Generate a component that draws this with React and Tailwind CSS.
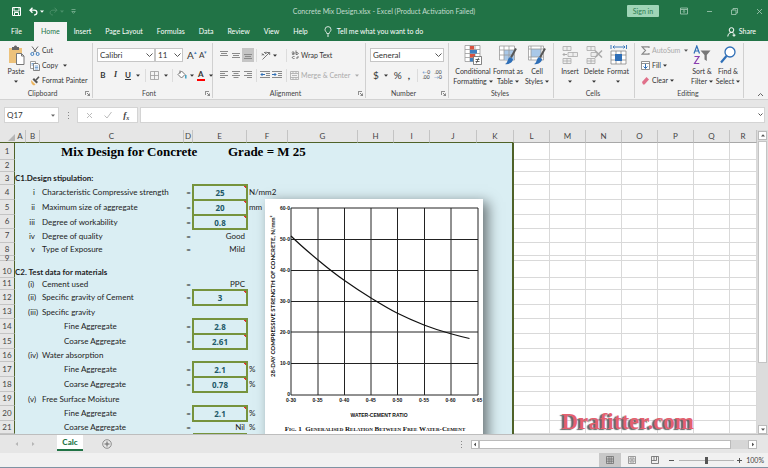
import { useState } from 'react';

const tabs = ['File', 'Home', 'Insert', 'Page Layout', 'Formulas', 'Data', 'Review', 'View', 'Help'];

const columns = [
  { name: 'A', width: 'w-[11px]' },
  { name: 'B', width: 'w-[14px]' },
  { name: 'C', width: 'w-[144px]' },
  { name: 'D', width: 'w-[9px]' },
  { name: 'E', width: 'w-[54px]' },
  { name: 'F', width: 'w-[41px]' },
  { name: 'G', width: 'w-[70px]' },
  { name: 'H', width: 'w-[36px]' },
  { name: 'I', width: 'w-[36px]' },
  { name: 'J', width: 'w-[47px]' },
  { name: 'K', width: 'w-[37px]' },
  { name: 'L', width: 'w-[36px]' },
  { name: 'M', width: 'w-[36px]' },
  { name: 'N', width: 'w-[36px]' },
  { name: 'O', width: 'w-[36px]' },
  { name: 'P', width: 'w-[36px]' },
  { name: 'Q', width: 'w-[36px]' },
  { name: 'R', width: 'w-auto' },
];

const rows = [
  { h: 'h-[17px]', title: 'Mix Design for Concrete', grade: 'Grade = M 25' },
  { h: 'h-[12px]' },
  { h: 'h-[13px]', heading: 'C1.Design stipulation:' },
  { h: 'h-[15px]', no: 'i', text: 'Characteristic Compressive strength', input: '25', unit: 'N/mm2' },
  { h: 'h-[15px]', no: 'ii', text: 'Maximum size of aggregate', input: '20', unit: 'mm' },
  { h: 'h-[14px]', no: 'iii', text: 'Degree of workability', input: '0.8' },
  { h: 'h-[14px]', no: 'iv', text: 'Degree of quality', value: 'Good' },
  { h: 'h-[13px]', no: 'v', text: 'Type of Exposure', value: 'Mild' },
  { h: 'h-[5px]', small: true },
  { h: 'h-[17px]', heading: 'C2. Test data for materials', low: true },
  { h: 'h-[12px]', no: '(i)', text: 'Cement used', value: 'PPC' },
  { h: 'h-[15px]', no: '(ii)', text: 'Specific gravity of Cement', input: '3' },
  { h: 'h-[14px]', no: '(iii)', text: 'Specific gravity' },
  { h: 'h-[15px]', sub: 'Fine Aggregate', input: '2.8' },
  { h: 'h-[15px]', sub: 'Coarse Aggregate', input: '2.61' },
  { h: 'h-[13px]', no: '(iv)', text: 'Water absorption' },
  { h: 'h-[15px]', sub: 'Fine Aggregate', input: '2.1', unit: '%' },
  { h: 'h-[15px]', sub: 'Coarse Aggregate', input: '0.78', unit: '%' },
  { h: 'h-[14px]', no: '(v)', text: 'Free Surface Moisture' },
  { h: 'h-[15px]', sub: 'Fine Aggregate', input: '2.1', unit: '%' },
  { h: 'h-[13px]', sub: 'Coarse Aggregate', value: 'Nil', unit: '%', last: true },
];

const Caret = ({ className = '' }) => (
  <svg className={`inline-block h-[3px] w-[4px] shrink-0 ${className}`} viewBox="0 0 4 3" fill="currentColor">
    <path d="M0 .5h4L2 2.7z" />
  </svg>
);

const Svg = ({ size = 'size-[10px]', box = '0 0 10 10', children }) => (
  <svg className={`${size} shrink-0`} viewBox={box} fill="none" stroke="currentColor">
    {children}
  </svg>
);

const Launcher = () => (
  <button aria-label="More options" className="text-[#666]">
    <svg className="size-[5px]" viewBox="0 0 5 5" fill="none" stroke="currentColor" strokeWidth=".8">
      <path d="M.4 4V.4H4M2 2l2.4 2.4M4.6 2.4v2.2H2.4" />
    </svg>
  </button>
);

const Group = ({ name, width, launcher, children }) => (
  <section className={`${width} flex shrink-0 flex-col pt-[2px] pb-[1px]`}>
    <div className="flex min-h-0 flex-1 border-r border-[#d0d0d0]">{children}</div>
    <div className="flex h-[10px] items-center border-r border-[#d0d0d0] pr-[2px]">
      <span className="flex-1 text-center leading-[10px] text-[#444]">{name}</span>
      {launcher && <Launcher />}
    </div>
  </section>
);

const BigButton = ({ icon, lines, width }) => (
  <button className={`${width} flex flex-col items-center pt-[2px]`}>
    <span className="flex h-[20px] items-center">{icon}</span>
    <span className="h-[12px] leading-[12px] whitespace-nowrap">{lines[0]}</span>
    <span className="flex h-[8px] items-center gap-[2px] leading-[8px] whitespace-nowrap">
      {lines[1]}
      <Caret />
    </span>
  </button>
);

const Select = ({ label, value, width }) => (
  <span className={`relative flex h-[14px] ${width}`}>
    <select aria-label={label} className="h-[14px] w-full appearance-none border border-[#c6c6c6] bg-white pl-[2px] text-[8px] leading-[12px] text-[#333]">
      <option>{value}</option>
    </select>
    <svg className="pointer-events-none absolute top-[5px] right-[2px] h-[5px] w-[7px]" viewBox="0 0 7 5" fill="none" stroke="#555">
      <path d="M.5.5l3 3 3-3" />
    </svg>
  </span>
);

const Divider = () => <span className="h-[13px] w-px shrink-0 bg-[#dcdcdc]" />;

const Lines = ({ d, label, active }) => (
  <button aria-label={label} className={`flex h-[14px] w-[12px] items-center justify-center ${active ? 'bg-[#c5c5c5]' : ''}`}>
    <Svg size="size-[8px]" box="0 0 8 8"><path d={d} stroke="#8a8a8a" /></Svg>
  </button>
);

const TitleBar = () => (
  <header className="flex h-[22px] items-center bg-[#217346] text-white">
    <div className="flex w-[141px] items-center gap-[5px] pl-[12px]">
      <button aria-label="Save">
        <Svg size="size-[9px]" box="0 0 9 9">
          <path d="M.5.5h8v8h-8zM2 .5v3.500h5V.5M2.500 8.500v-3h4v3" />
        </Svg>
      </button>
      <button aria-label="Undo" className="ml-[3px] flex items-center gap-[2px]">
        <Svg size="size-[9px]" box="0 0 9 9"><path d="M3.5.7L1 3.2l2.5 2.5M1 3.2h4.2c3.6 0 3.6 4.8 0 4.8" strokeWidth="1.300" /></Svg>
        <Caret />
      </button>
      <button aria-label="Redo" className="flex items-center gap-[2px] text-[#4b9069]">
        <Svg size="size-[9px]" box="0 0 9 9"><path d="M5.5.7L8 3.2 5.5 5.7M8 3.2H3.8c-3.6 0-3.6 4.8 0 4.8" /></Svg>
        <Caret />
      </button>
      <button aria-label="Customize toolbar" className="ml-[2px] flex text-[#7fb496]">
        <Svg size="size-[5px]" box="0 0 5 5"><path d="M.5.5h4M.7 2.500h3.600L2.500 4.300z" strokeWidth=".8" /></Svg>
      </button>
    </div>
    <h1 className="flex-1 text-center text-[7px] text-[#c3dccf]">Concrete Mix Design.xlsx&nbsp;-&nbsp;Excel (Product Activation Failed)</h1>
    <button className="h-[12px] w-[32px] rounded-[1px] bg-[#9fd5b7] text-[7px] leading-[12px] text-[#2e7d52]">Sign in</button>
    <div className="flex w-[109px] items-center justify-end gap-[18px] pr-[5px] text-[#a9cdb9]">
      <button aria-label="Ribbon display options">
        <Svg size="size-[8px]" box="0 0 8 8"><path d="M.5 1h7v6h-7zM.5 2.500h7M4 6V3.500M3 4.500l1-1 1 1" strokeWidth=".8" /></Svg>
      </button>
      <button aria-label="Minimize"><Svg size="size-[7px]" box="0 0 7 7"><path d="M1 3.500h5" strokeWidth=".8" /></Svg></button>
      <button aria-label="Restore"><Svg size="size-[7px]" box="0 0 7 7"><path d="M.5 2h4.500v4.500H.5zM2 2V.5h4.500V5H5" strokeWidth=".8" /></Svg></button>
      <button aria-label="Close"><Svg size="size-[7px]" box="0 0 7 7"><path d="M1 1l5 5M6 1L1 6" strokeWidth=".8" /></Svg></button>
    </div>
  </header>
);

const Tabs = ({ active, onSelect }) => (
  <nav className="flex h-[19px] bg-[#217346] pl-[4px] text-[7px] text-white">
    {tabs.map((tab) => (
      <button
        key={tab}
        onClick={() => onSelect(tab)}
        className={`px-[7px] whitespace-nowrap first:mr-[5px] ${tab === active ? 'bg-[#f3f3f3] text-[#217346]' : ''}`}
      >
        {tab}
      </button>
    ))}
    <button className="ml-[9px] flex items-center gap-[5px] whitespace-nowrap">
      <Svg size="h-[11px] w-[8px]" box="0 0 8 11">
        <path d="M2.800 7.500C2.800 6 1 5.500 1 3.600a3 3 0 0 1 6 0C7 5.500 5.200 6 5.200 7.500zM3 9h2M3.300 10.300h1.400" strokeWidth=".8" />
      </Svg>
      Tell me what you want to do
    </button>
    <button className="ml-auto flex items-center gap-[3px] pr-[12px]">
      <Svg size="h-[10px] w-[9px]" box="0 0 9 10">
        <circle cx="4.500" cy="3" r="2.300" />
        <path d="M.8 9.500c.2-2.500 1.500-4 3.700-4 1 0 1.800.3 2.400.8M5.500 8.200h3M7 6.700v3" />
      </Svg>
      Share
    </button>
  </nav>
);

const Ribbon = () => (
  <div className="flex h-[59px] border-b border-[#d2d2d2] bg-[#f3f3f3] text-[7px] text-[#333]">
    <Group name="Clipboard" width="w-[93px]" launcher>
      <BigButton
        width="w-[28px] ml-[2px]"
        lines={['Paste', '']}
        icon={
          <Svg size="h-[20px] w-[17px]" box="0 0 17 20">
            <path d="M1 3h13v15H1z" fill="#edc27b" stroke="none" />
            <path d="M4 2h2c0-2 3-2 3 0h2v3H4z" fill="#666" stroke="none" />
            <path d="M8.500 8.500h5l2.500 2.500v8.500H8.500z" fill="#fff" stroke="#777" />
            <path d="M13.500 8.500V11H16" stroke="#777" />
          </Svg>
        }
      />
      <div className="flex flex-col">
        <button className="flex h-[15px] items-center gap-[2px]">
          <Svg>
            <path d="M2 .5l4.500 6M8 .5l-4.500 6" stroke="#666" />
            <circle cx="2.300" cy="8" r="1.500" stroke="#3f7fc1" />
            <circle cx="7.700" cy="8" r="1.500" stroke="#3f7fc1" />
          </Svg>
          Cut
        </button>
        <button className="flex h-[15px] items-center gap-[2px]">
          <Svg>
            <path d="M.5.5h5v7h-5z" fill="#fff" stroke="#888" strokeWidth=".8" />
            <path d="M3.500 2.500H8L9.500 4v5.500h-6z" fill="#fff" stroke="#666" strokeWidth=".8" />
            <path d="M4.800 5h3.400M4.800 6.500h3.400M4.800 8h3.400M1.500 2.500h2M1.500 4h1.500" stroke="#3f7fc1" strokeWidth=".7" />
          </Svg>
          Copy <Caret className="ml-[3px]" />
        </button>
        <button className="flex h-[15px] items-center gap-[2px] whitespace-nowrap">
          <Svg>
            <path d="M1 4l4.500 4.500L4 9.500C2 9 1 7 1 4z" fill="#edb55e" stroke="none" />
            <path d="M2.500 3.500l4 4L8 6 4 2z" fill="#555" stroke="none" />
            <path d="M6 4l3-3.300" stroke="#555" strokeWidth="1.600" />
          </Svg>
          Format Painter
        </button>
      </div>
    </Group>

    <Group name="Font" width="w-[120px]" launcher>
      <div className="flex flex-1 flex-col gap-[6px] pt-[5px] pl-[4px]">
        <div className="flex items-center">
          <Select label="Font" value="Calibri" width="w-[58px]" />
          <Select label="Font size" value="11" width="w-[28px]" />
          <button aria-label="Increase font size" className="ml-[4px] flex w-[12px] text-[10px] leading-[14px]">A<span className="text-[5px] leading-[8px] text-[#3f7fc1]">▴</span></button>
          <button aria-label="Decrease font size" className="flex w-[12px] text-[8px] leading-[14px]">A<span className="text-[5px] leading-[8px] text-[#3f7fc1]">▾</span></button>
        </div>
        <div className="flex h-[14px] items-center text-[8px]">
          <button className="w-[12px] font-bold">B</button>
          <button className="w-[13px] font-['Liberation_Serif',serif] font-bold italic">I</button>
          <button className="w-[12px] font-bold underline">U</button>
          <Caret className="ml-[2px]" />
          <span className="w-[5px]" />
          <Divider />
          <button aria-label="Borders" className="ml-[4px] flex items-center gap-[5px]">
            <Svg size="size-[9px]" box="0 0 9 9"><path d="M.5.5h8v8h-8zM4.500.5v8M.5 4.500h8" stroke="#999" strokeWidth=".8" /></Svg>
            <Caret />
          </button>
          <span className="w-[4px]" />
          <Divider />
          <button aria-label="Fill color" className="ml-[4px] flex items-center gap-[3px]">
            <Svg>
              <path d="M1 4.500L4.500 1l3.500 3.500-3.500 3.500zM3 .5v3" fill="#fff" stroke="#666" strokeWidth=".9" />
              <path d="M8.800 5v3.500" stroke="#3f9fc1" strokeWidth="1.500" />
            </Svg>
            <Caret />
          </button>
          <button aria-label="Font color" className="ml-[3px] flex items-center gap-[4px]">
            <span className="h-[11px] border-b-2 border-[#f00] px-[1px] font-bold leading-[9px]">A</span>
            <Caret />
          </button>
        </div>
      </div>
    </Group>

    <Group name="Alignment" width="w-[153px]" launcher>
      <div className="flex flex-1 flex-col gap-[6px] pt-[5px] pl-[5px]">
        <div className="flex items-center">
          <Lines label="Top align" d="M0 .5h8M1 2.500h6M0 4.500h8" />
          <Lines label="Middle align" d="M0 2.500h8M1 4.500h6M0 6.500h8" />
          <Lines label="Bottom align" active d="M0 3.500h8M1 5.500h6M0 7.500h8" />
          <span className="w-[2px]" />
          <Divider />
          <button aria-label="Orientation" className="ml-[4px] flex w-[25px] items-center gap-[2px]">
            <Svg>
              <path d="M1.500 9.500l7-7M6 2.500h2.700V5" stroke="#666" strokeWidth=".9" />
              <path d="M1 3.500l2 2M3 2l2 2M1 5.500c0-2 1.500-1.500 2-.5M4 3c1-2 2.500-.5 1.500.5" stroke="#555" strokeWidth=".8" />
            </Svg>
            <Caret />
          </button>
          <Divider />
          <button className="ml-[4px] flex items-center gap-[2px] whitespace-nowrap">
            <Svg size="h-[10px] w-[8px]" box="0 0 8 10">
              <path d="M3 4.500V2.500c0-1-2-1-2 0M3 3.200c-2-.3-2.500 1.300-1 1.300.5 0 1-.4 1-.8M5 .5v4c3 .3 3-2.500 0-1.800M3.500 6.500c-3-.5-3 2.500 0 2M5 8h2V6" stroke="#555" strokeWidth=".8" />
            </Svg>
            Wrap Text
          </button>
        </div>
        <div className="flex items-center">
          <Lines label="Align left" d="M0 .5h8M0 2.500h5M0 4.500h8M0 6.500h5" />
          <Lines label="Center" d="M0 .5h8M1.500 2.500h5M0 4.500h8M1.500 6.500h5" />
          <Lines label="Align right" d="M0 .5h8M3 2.500h5M0 4.500h8M3 6.500h5" />
          <span className="w-[2px]" />
          <Divider />
          <button aria-label="Decrease indent" className="ml-[3px]">
            <Svg><path d="M0 1.500h10M6 3.500h4M6 5.500h4M0 7.500h10" stroke="#888" /><path d="M5 4.500H1M2.500 3L1 4.500 2.500 6" stroke="#2f6fb7" /></Svg>
          </button>
          <button aria-label="Increase indent" className="ml-[2px]">
            <Svg><path d="M0 1.500h10M6 3.500h4M6 5.500h4M0 7.500h10" stroke="#888" /><path d="M0 4.500h4M2.500 3L4 4.500 2.500 6" stroke="#2f6fb7" /></Svg>
          </button>
          <span className="w-[4px]" />
          <Divider />
          <button disabled className="ml-[3px] flex items-center gap-[2px] whitespace-nowrap text-[#aaa]">
            <Svg size="size-[9px]" box="0 0 9 9"><path d="M.5.5h8v8h-8zM.5 2.500h8M.5 6.500h8M3 .5v2M6 .5v2M3 6.500v2M6 6.500v2M2 4.500h5" strokeWidth=".8" /></Svg>
            Merge &amp; Center <Caret className="ml-[3px]" />
          </button>
        </div>
      </div>
    </Group>

    <Group name="Number" width="w-[83px]" launcher>
      <div className="flex flex-1 flex-col gap-[6px] pt-[5px] pl-[4px]">
        <Select label="Number format" value="General" width="w-[74px]" />
        <div className="flex h-[14px] items-center text-[10px]">
          <button aria-label="Accounting format" className="ml-[3px] flex items-center gap-[5px]">$ <Caret /></button>
          <button className="ml-[6px]">%</button>
          <button className="ml-[6px] font-bold">,</button>
          <span className="w-[7px]" />
          <Divider />
          <button aria-label="Increase decimal" className="ml-[4px] flex flex-col text-[5px] leading-[5px]"><span><span className="text-[#2f6fb7]">←</span>0</span><span>.00</span></button>
          <button aria-label="Decrease decimal" className="ml-[4px] flex flex-col text-[5px] leading-[5px]"><span>.00</span><span><span className="text-[#2f6fb7]">→</span>0</span></button>
        </div>
      </div>
    </Group>

    <Group name="Styles" width="w-[105px]">
      <BigButton
        width="w-[42px] ml-[3px]"
        lines={['Conditional', 'Formatting']}
        icon={
          <Svg size="h-[20px] w-[18px]" box="0 0 18 20">
            <path d="M1 .5h15v16H1zM6 .5v16M11 .5v16M1 4.500h15M1 8.500h15M1 12.500h15" fill="#fff" stroke="#999" strokeWidth=".8" />
            <path d="M6 1h4v3.500H6zM6 9h5v3.500H6z" fill="#d9523f" stroke="none" />
            <path d="M6 5h7v3.500H6zM6 13h3v3.500H6z" fill="#3f7fc1" stroke="none" />
            <path d="M9.500 11.500h8v8h-8z" fill="#fff" stroke="#666" strokeWidth=".8" />
            <path d="M11.500 14.500h4M11.500 16.500h4M12.300 18.300l2.400-5.500" stroke="#444" strokeWidth=".8" />
          </Svg>
        }
      />
      <BigButton
        width="w-[28px]"
        lines={['Format as', 'Table']}
        icon={
          <Svg size="h-[20px] w-[18px]" box="0 0 18 20">
            <path d="M.5 1h15v14H.5z" fill="#fff" stroke="#999" strokeWidth=".8" />
            <path d="M5 5h10v10H5z" fill="#a9c8e8" stroke="none" />
            <path d="M.5 5h15M.5 10h15M5 1v14M10 1v14" stroke="#999" strokeWidth=".8" />
            <path d="M17 3.500l-5 9" stroke="#555" strokeWidth="2" />
            <path d="M6 19c3-1 2-5 5-7l3 2c0 3-4 6-8 5z" fill="#2f6fb7" stroke="none" />
          </Svg>
        }
      />
      <BigButton
        width="w-[30px]"
        lines={['Cell', 'Styles']}
        icon={
          <Svg size="h-[20px] w-[18px]" box="0 0 18 20">
            <path d="M.5 1h15v14H.5z" fill="#fff" stroke="#999" strokeWidth=".8" />
            <path d="M3 4h10v8H3z" fill="#a9c8e8" stroke="none" />
            <path d="M.5 4h15M.5 12h15M3 1v14M13 1v14" stroke="#999" strokeWidth=".8" />
            <path d="M17 3.500l-5 9" stroke="#555" strokeWidth="2" />
            <path d="M6 19c3-1 2-5 5-7l3 2c0 3-4 6-8 5z" fill="#2f6fb7" stroke="none" />
          </Svg>
        }
      />
    </Group>

    <Group name="Cells" width="w-[81px]">
      <BigButton
        width="w-[24px] ml-[4px]"
        lines={['Insert', '']}
        icon={
          <Svg size="h-[18px] w-[16px]" box="0 0 16 18">
            <path d="M1 .5h8v4H1zM5 .5v4M6 6.500h9.500v4H6zM11 6.500v4M1 12.500h8v5H1zM5 12.500v5M1 15h8" fill="#eee" stroke="#aaa" strokeWidth=".8" />
            <path d="M5 8.500H1M2.500 7L1 8.500 2.500 10" stroke="#aaa" />
          </Svg>
        }
      />
      <BigButton
        width="w-[24px]"
        lines={['Delete', '']}
        icon={
          <Svg size="h-[18px] w-[17px]" box="0 0 17 18">
            <path d="M1 .5h8v4H1zM5 .5v4M5 6.500h6v4H5zM1 12.500h8v5H1zM5 12.500v5M1 15h8" fill="#eee" stroke="#aaa" strokeWidth=".8" />
            <path d="M9 4.500l7 7M16 4.500l-7 7" stroke="#aaa" strokeWidth="1.500" />
          </Svg>
        }
      />
      <BigButton
        width="w-[24px]"
        lines={['Format', '']}
        icon={
          <Svg size="h-[20px] w-[17px]" box="0 0 17 20">
            <path d="M3 2h12M4.500.5L3 2l1.500 1.500M13.500.5L15 2l-1.500 1.500M1 0v4M16.500 0v4" stroke="#2f6fb7" strokeWidth=".9" />
            <path d="M1 6h15v13H1zM6 6v13M11 6v13M1 10h15M1 15h15" fill="#fff" stroke="#888" strokeWidth=".8" />
            <path d="M5 9h7v7H5z" fill="#2f6fb7" stroke="none" />
          </Svg>
        }
      />
    </Group>

    <Group name="Editing" width="w-[109px]">
      <div className="flex w-[53px] flex-col pl-[6px]">
        <button disabled className="flex h-[15px] items-center gap-[2px] text-[#aaa]">
          <Svg size="size-[9px]" box="0 0 9 9"><path d="M8 2V.8H1l3.500 3.700L1 8.200h7V7" stroke="#888" strokeWidth="1.200" /></Svg>
          AutoSum <Caret className="ml-[2px] text-[#555]" />
        </button>
        <button className="flex h-[15px] items-center gap-[2px]">
          <Svg size="size-[9px]" box="0 0 9 9"><path d="M.5.5h8v8h-8zM.5 2.500h8" stroke="#777" strokeWidth=".8" fill="#fff" /><path d="M4.500 3v4.500M2.500 5.500l2 2 2-2" stroke="#2f6fb7" /></Svg>
          Fill <Caret />
        </button>
        <button className="flex h-[15px] items-center gap-[2px]">
          <Svg size="size-[9px]" box="0 0 9 9"><path d="M1 6l4.500-5L8 3.500 3.500 8.500H2z" fill="#e0708a" stroke="none" /></Svg>
          Clear <Caret />
        </button>
      </div>
      <BigButton
        width="w-[26px] ml-[1px]"
        lines={['Sort &', 'Filter']}
        icon={
          <Svg size="h-[20px] w-[18px]" box="0 0 18 20">
            <path d="M1 8.500L3.800 1l2.700 7.500M2 6h3.700" stroke="#2f6fb7" strokeWidth="1.200" />
            <path d="M1.500 11.500H6l-4.500 7H6.300" stroke="#8a3fb0" strokeWidth="1.200" />
            <path d="M7.500 5.500h10l-3.700 4.500v6l-2.300-1.500V10z" fill="#777" stroke="none" />
          </Svg>
        }
      />
      <BigButton
        width="w-[26px]"
        lines={['Find &', 'Select']}
        icon={
          <Svg size="h-[18px] w-[16px]" box="0 0 16 18">
            <circle cx="10" cy="6" r="5" fill="#fff" stroke="#2f6fb7" strokeWidth="1.300" />
            <path d="M6.500 10L1 16.500" stroke="#2f6fb7" strokeWidth="2.200" />
          </Svg>
        }
      />
    </Group>
    <button aria-label="Collapse ribbon" className="mt-auto mr-[4px] mb-[2px] ml-auto">
      <Svg size="h-[5px] w-[7px]" box="0 0 7 5"><path d="M1 4l2.500-2.500L6 4" stroke="#666" /></Svg>
    </button>
  </div>
);

const FormulaBar = () => (
  <div className="flex h-[30px] items-start bg-[#e6e6e6] pt-[7px] pr-[3px] pl-[4px]">
    <div className="relative w-[55px] shrink-0">
      <input aria-label="Name box" defaultValue="Q17" className="block h-[16px] w-full border border-[#d4d4d4] bg-white pl-[2px] text-[8px] text-[#333]" />
      <Caret className="absolute top-[7px] right-[4px] text-[#666]" />
    </div>
    <span className="flex h-[16px] w-[18px] flex-col items-center justify-center gap-[2px]">
      <i className="size-px bg-[#888]" />
      <i className="size-px bg-[#888]" />
      <i className="size-px bg-[#888]" />
    </span>
    <div className="flex h-[16px] w-[61px] shrink-0 items-center justify-around border border-[#d4d4d4] bg-white px-[2px]">
      <button aria-label="Cancel"><Svg size="size-[7px]" box="0 0 7 7"><path d="M1 1l5 5M6 1L1 6" stroke="#bbb" /></Svg></button>
      <button aria-label="Enter"><Svg size="size-[8px]" box="0 0 8 8"><path d="M.5 4.500L3 7l4.500-6" stroke="#bbb" /></Svg></button>
      <button aria-label="Insert function" className="font-['Liberation_Serif',serif] text-[9px] leading-[14px] font-bold text-[#444] italic">f<sub className="text-[6px]">x</sub></button>
    </div>
    <div className="relative ml-[2px] flex-1">
      <input aria-label="Formula" className="block h-[16px] w-full border border-[#d4d4d4] bg-white px-[2px] text-[8px]" />
      <svg className="absolute top-[6px] right-[2px] h-[4px] w-[5px]" viewBox="0 0 5 4" fill="none" stroke="#555"><path d="M.5.5l2 2 2-2" /></svg>
    </div>
  </div>
);

const InputCell = ({ children }) => (
  <td className="bg-[linear-gradient(225deg,#e03030_3px,transparent_3px)] text-center font-['Open_Sans',sans-serif] font-bold text-[#215967] outline-2 -outline-offset-1 outline-[#76933c]">
    {children}
  </td>
);

const SheetRow = ({ row, index }) => (
  <tr className={row.h}>
    <th scope="row" className={`border-r border-b border-r-[#4f6228] border-b-[#c4c4c4] bg-[#e6e6e6] font-normal text-[#444] ${row.small ? 'leading-[4px]' : 'leading-[11px]'} ${row.low ? 'align-bottom' : ''}`}>
      {index + 1}
    </th>
    {row.heading ? (
      <td colSpan={4} className={`font-bold ${row.low ? 'align-bottom' : ''}`}>{row.heading}</td>
    ) : (
      <>
        <td />
        <td className={row.no?.startsWith('(') ? 'pl-[2px]' : 'pr-[5px] text-right'}>{row.no}</td>
        {row.title ? (
          <td className="pl-[21px] font-['Liberation_Serif',serif] text-[13px] font-bold text-black">{row.title}</td>
        ) : (
          <td className={row.sub ? 'pl-[24px]' : 'pl-[2px]'}>{row.text || row.sub}</td>
        )}
        <td className="text-center">{(row.input || row.value) && '='}</td>
      </>
    )}
    {row.grade ? (
      <td colSpan={3} className="pl-[35px] font-['Liberation_Serif',serif] text-[13px] font-bold text-black">{row.grade}</td>
    ) : (
      <>
        {row.input ? <InputCell>{row.input}</InputCell> : <td className={`pr-[2px] text-right ${row.last ? 'border-b border-[#76933c]' : ''}`}>{row.value}</td>}
        <td className="pl-[2px]">{row.unit}</td>
        <td />
      </>
    )}
    <td colSpan={4} className="border-r-2 border-[#4f6228]" />
    {columns.slice(11).map((c) => (
      <td key={c.name} className="border-r border-b border-[#d9d9d9] bg-white" />
    ))}
  </tr>
);

const ticksX = ['0·30', '0·35', '0·40', '0·45', '0·50', '0·55', '0·60', '0·65'];
const ticksY = ['60·0', '50·0', '40·0', '30·0', '20·0', '10·0', '0'];

const Chart = () => (
  <svg
    className="absolute top-[69px] left-[265px] h-[250px] w-[218px] bg-white font-['Liberation_Sans',sans-serif] shadow-[5px_3px_12px_rgba(0,0,0,0.5)]"
    viewBox="0 0 218 250"
    fill="#111"
  >
    <path
      d="M26 9h187v187H26zM53 9v187M79.500 9v187M106 9v187M132.500 9v187M159.500 9v187M186 9v187M26 40.500h187M26 71.500h187M26 102.500h187M26 133h187M26 164.500h187"
      fill="none"
      stroke="#222"
      strokeWidth="1"
    />
    <path d="M26 37C34 45 44 53.500 53 61C62 68.500 70 75 79.500 81.500C88 87.500 97 93.500 106 99C115 104.500 123 109.500 132 114C141 118.500 149 122 159 126C168 129.500 176 132 185 134.500C192 136.500 198 138 204.500 139.500" fill="none" stroke="#111" strokeWidth="1.200" />
    {ticksX.map((t, i) => (
      <text key={t} x={26 + i * 26.6} y="203" textAnchor="middle" className="text-[5px] font-bold">{t}</text>
    ))}
    {ticksY.map((t, i) => (
      <text key={t} x="25" y={11 + i * 31} textAnchor="end" className="text-[5px] font-bold">{t}</text>
    ))}
    <text transform="translate(10 178) rotate(-90)" className="font-['Lato',sans-serif] text-[6px] font-bold">28-DAY COMPRESSIVE STRENGTH OF CONCRETE, N/mm²</text>
    <text x="114" y="218" textAnchor="middle" className="text-[5px] font-bold">WATER-CEMENT RATIO</text>
    <text x="110" y="232" textAnchor="middle" className="font-['Liberation_Serif',serif] text-[7px] font-bold [font-variant:small-caps]">
      Fig. 1&nbsp; Generalised Relation Between Free Water-Cement
    </text>
    <text x="110" y="239" textAnchor="middle" className="font-['Liberation_Serif',serif] text-[7px] font-bold [font-variant:small-caps]">
      Ratio and Compressive Strength of Concrete
    </text>
  </svg>
);

const Sheet = () => (
  <main className="flex flex-1 bg-[#e6e6e6]">
    <div className="relative min-w-0 flex-1 overflow-hidden">
      <table className="w-full table-fixed border-separate border-spacing-0 bg-[#daeef3] text-[8px] leading-[11px] whitespace-nowrap text-[#222] [&_td]:py-0 [&_th]:p-0">
        <colgroup>
          <col className="w-[15px]" />
          {columns.map((c) => <col key={c.name} className={c.width} />)}
        </colgroup>
        <thead>
          <tr className="h-[13px] bg-[#e6e6e6] text-[#444]">
            <th aria-label="Select all" className="border-b border-[#4f6228]">
              <svg className="mt-[2px] ml-auto size-[7px]" viewBox="0 0 7 7"><path d="M7 0v7H0z" fill="#b5b5b5" /></svg>
            </th>
            {columns.map((c, i) => (
              <th key={c.name} scope="col" className={`border-r border-b border-r-[#c4c4c4] font-normal ${i < 11 ? 'border-b-[#4f6228]' : 'border-b-[#a8a8a8]'}`}>
                {c.name}
              </th>
            ))}
          </tr>
        </thead>
        <tbody>
          {rows.map((row, i) => <SheetRow key={i} row={row} index={i} />)}
        </tbody>
      </table>
      <Chart />
      <p className="absolute right-[63px] bottom-0 font-['Liberation_Serif',serif] text-[23px] leading-[25px] font-bold text-[#e4606f] [text-shadow:-2px_1px_1px_#666]">
        Drafitter.com
      </p>
    </div>
    <div className="flex w-[11px] flex-col items-center bg-[#dcdcdc] pt-px">
      <button aria-label="Scroll up" className="flex h-[9px] w-[9px] items-center justify-center border border-[#bbb] bg-white text-[#555]"><Caret className="rotate-180" /></button>
      <span className="mt-px h-[222px] w-[9px] border border-[#c4c4c4] bg-white" />
      <button aria-label="Scroll down" className="mt-auto flex h-[9px] w-[9px] items-center justify-center border border-[#bbb] bg-white text-[#555]"><Caret /></button>
    </div>
  </main>
);

const SheetTabs = () => (
  <div className="flex h-[19px] border-t border-[#bdbdbd] bg-[#e6e6e6] text-[8px]">
    <div className="flex w-[57px] items-center gap-[12px] pl-[15px] text-[#b5b5b5]">
      <button aria-label="Previous sheet"><Svg size="size-[4px]" box="0 0 4 4"><path d="M3 0L.5 2 3 4z" fill="currentColor" stroke="none" /></Svg></button>
      <button aria-label="Next sheet"><Svg size="size-[4px]" box="0 0 4 4"><path d="M1 0l2.500 2L1 4z" fill="currentColor" stroke="none" /></Svg></button>
    </div>
    <button className="h-[16px] w-[26px] border-b-2 border-[#217346] bg-white font-black text-[#217346]">Calc</button>
    <button aria-label="New sheet" className="ml-[19px]">
      <Svg><circle cx="5" cy="5" r="4.300" stroke="#777" strokeWidth=".8" /><path d="M5 2.500v5M2.500 5h5" stroke="#666" /></Svg>
    </button>
    <div className="ml-auto flex w-[317px] items-center pr-[11px]">
      <span className="flex w-[20px] flex-col gap-[2px] pl-[10px]">
        <i className="size-px bg-[#888]" />
        <i className="size-px bg-[#888]" />
        <i className="size-px bg-[#888]" />
      </span>
      <div className="flex h-[9px] flex-1 bg-[#d6d6d6]">
        <button aria-label="Scroll left" className="flex w-[8px] items-center justify-center border border-[#bbb] bg-white text-[#555]"><Caret className="rotate-90" /></button>
        <span className="w-[252px] border border-[#bbb] bg-white" />
        <button aria-label="Scroll right" className="ml-auto flex w-[9px] items-center justify-center border border-[#bbb] bg-white text-[#555]"><Caret className="-rotate-90" /></button>
      </div>
    </div>
  </div>
);

const StatusBar = ({ zoom, onZoom }) => (
  <footer className="flex h-[15px] items-center justify-end border-b border-[#7f93a3] bg-[#f1f1f1] pr-[4px] text-[7px] text-[#444]">
    <button aria-label="Normal view" className="flex h-[14px] w-[22px] items-center justify-center bg-[#c8c8c8]">
      <Svg size="size-[8px]" box="0 0 8 8"><path d="M.5.5h7v7h-7zM3 .5v7M5.200.5v7M.5 3h7M.5 5.200h7" stroke="#666" strokeWidth=".7" /></Svg>
    </button>
    <button aria-label="Page layout view" className="flex w-[22px] items-center justify-center">
      <Svg size="size-[8px]" box="0 0 8 8"><path d="M.5.5h7v7h-7zM2 2h4v4H2zM3 3.300h2M3 4.700h2" stroke="#777" strokeWidth=".7" /></Svg>
    </button>
    <button aria-label="Page break preview" className="flex w-[23px] items-center justify-center">
      <Svg size="size-[8px]" box="0 0 8 8"><path d="M.5.5h7v7h-7zM3 .5v4M5.500.5v4M.5 4.500h5" stroke="#666" strokeWidth=".8" /></Svg>
    </button>
    <button aria-label="Zoom out" className="mr-[5px] ml-[3px]"><Svg size="size-[5px]" box="0 0 5 5"><path d="M0 2.500h5" stroke="#555" /></Svg></button>
    <input
      type="range"
      aria-label="Zoom"
      min="10"
      max="190"
      value={zoom}
      onChange={(e) => onZoom(Number(e.target.value))}
      className="h-px w-[55px] appearance-none bg-[#b5b5b5] [&::-webkit-slider-thumb]:h-[7px] [&::-webkit-slider-thumb]:w-[3px] [&::-webkit-slider-thumb]:appearance-none [&::-webkit-slider-thumb]:bg-[#555]"
    />
    <button aria-label="Zoom in" className="ml-[3px]"><Svg size="size-[5px]" box="0 0 5 5"><path d="M0 2.500h5M2.500 0v5" stroke="#555" /></Svg></button>
    <span className="w-[22px] text-right">{zoom}%</span>
  </footer>
);

export default function App() {
  const [tab, setTab] = useState('Home');
  const [zoom, setZoom] = useState(100);

  return (
    <div className="flex min-h-screen flex-col overflow-hidden bg-[#e6e6e6] font-['Lato','Open_Sans',sans-serif]">
      <TitleBar />
      <Tabs active={tab} onSelect={setTab} />
      <Ribbon />
      <FormulaBar />
      <Sheet />
      <SheetTabs />
      <StatusBar zoom={zoom} onZoom={setZoom} />
    </div>
  );
}
